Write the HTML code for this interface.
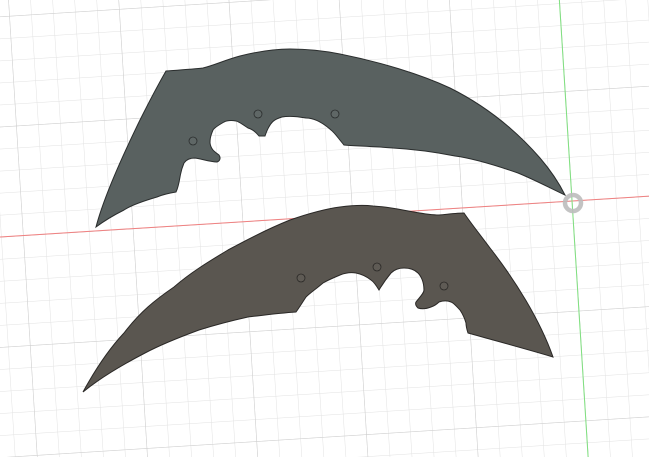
<!DOCTYPE html>
<html><head><meta charset="utf-8"><style>html,body{margin:0;padding:0;background:#fff;width:649px;height:457px;overflow:hidden}svg{display:block}</style></head>
<body>
<svg width="649" height="457" viewBox="0 0 649 457" xmlns="http://www.w3.org/2000/svg">
<defs>
<pattern id="minor" x="572" y="201" width="22" height="22" patternUnits="userSpaceOnUse">
<path d="M0 0H22M0 0V22" stroke="#e2e2e2" stroke-width="1" fill="none"/>
</pattern>
<pattern id="major" x="572" y="201" width="110" height="110" patternUnits="userSpaceOnUse">
<path d="M0 0H110M0 0V110" stroke="#cdcdcd" stroke-width="1" fill="none"/>
</pattern>
</defs>
<rect width="649" height="457" fill="#fff"/>
<g transform="rotate(-3.6 572 201)">
<rect x="-400" y="-400" width="1500" height="1300" fill="url(#minor)"/>
<rect x="-400" y="-400" width="1500" height="1300" fill="url(#major)"/>
<line x1="-400" y1="201" x2="1100" y2="201" stroke="#f08080" stroke-width="1"/>
<line x1="572" y1="-400" x2="572" y2="900" stroke="#7fe07f" stroke-width="1"/>
</g>
<path d="M96 227 C103 200 118 165 140 120 C150 100 158 85 166 71 C180 70 195 69 203 68 C215 65 225 60 240 56 C260 51 275 49 290 49 C305 49 320 50 340 54 C380 62 420 74 450 88 C490 108 520 135 540 158 C552 172 560 185 565 195 C550 188 535 180 518 173 C495 165 470 158 455 156 C430 151 410 149 393 148 C370 146 355 146 344 145 C338 138 335 133 331 130 C322 122 313 118 306 118 C295 116 287 116 282 117 C275 119 270 121 265 136 L259 136 C255 131 252 129 248 128 C242 124 238 121 236 121 C230 120 226 121 224 122 C217 126 214 128 213 130 C210 137 210 140 210 143 C211 150 215 152 219 155 C221 158 220 161 217 162 C210 162 202 159 195 158 C190 158 186 160 184 163 C181 170 181 172 180 177 C179 183 178 188 176 192 C170 193 164 194 157 197 C140 202 130 206 124 210 C112 216 104 221 96 227 Z" fill="#596160" stroke="#2a2d2d" stroke-width="1"/>
<circle cx="193" cy="141" r="4" fill="#5f6766" stroke="#2a2d2d" stroke-width="0.8"/>
<circle cx="258" cy="114" r="4" fill="#5f6766" stroke="#2a2d2d" stroke-width="0.8"/>
<circle cx="335" cy="114" r="4" fill="#5f6766" stroke="#2a2d2d" stroke-width="0.8"/>
<path d="M83 392 C95 370 108 350 124 333 C140 312 155 300 174 287 C190 273 208 262 228 250 C250 238 270 228 290 220 C310 213 325 209 340 207 C355 205 365 205 373 206 C390 207 402 210 414 212 C425 214 432 215 439 215 C450 214 458 213 464 213 C470 222 478 232 490 248 C515 280 540 320 553 357 C530 350 500 342 468 333 C467 330 466 326 466 323 C464 316 462 313 460 310 C456 306 454 303 451 302 C446 300 442 301 439 302 C436 305 434 306 431 307 C426 309 421 309 418 308 C416 306 415 304 416 302 C420 297 424 293 424 290 C424 282 421 276 418 273 C414 269 409 268 404 268 C399 268 394 270 391 273 C386 279 382 285 379 290 C376 285 374 282 371 280 C366 276 361 274 356 273 C350 272 345 273 340 275 C333 278 328 280 323 283 C316 289 310 293 306 297 C302 303 299 308 296 312 C280 313 265 315 248 317 C230 321 215 325 199 330 C180 337 162 344 145 353 C120 366 100 378 83 392 Z" fill="#5a5650" stroke="#2a2826" stroke-width="1"/>
<circle cx="301" cy="278" r="4" fill="#5f5b55" stroke="#2a2826" stroke-width="0.8"/>
<circle cx="377" cy="267" r="4" fill="#5f5b55" stroke="#2a2826" stroke-width="0.8"/>
<circle cx="444" cy="286" r="4" fill="#5f5b55" stroke="#2a2826" stroke-width="0.8"/>
<circle cx="573" cy="203" r="8" fill="none" stroke="#bdbdbd" stroke-width="4.5" opacity="0.9"/>
</svg>
</body></html>
